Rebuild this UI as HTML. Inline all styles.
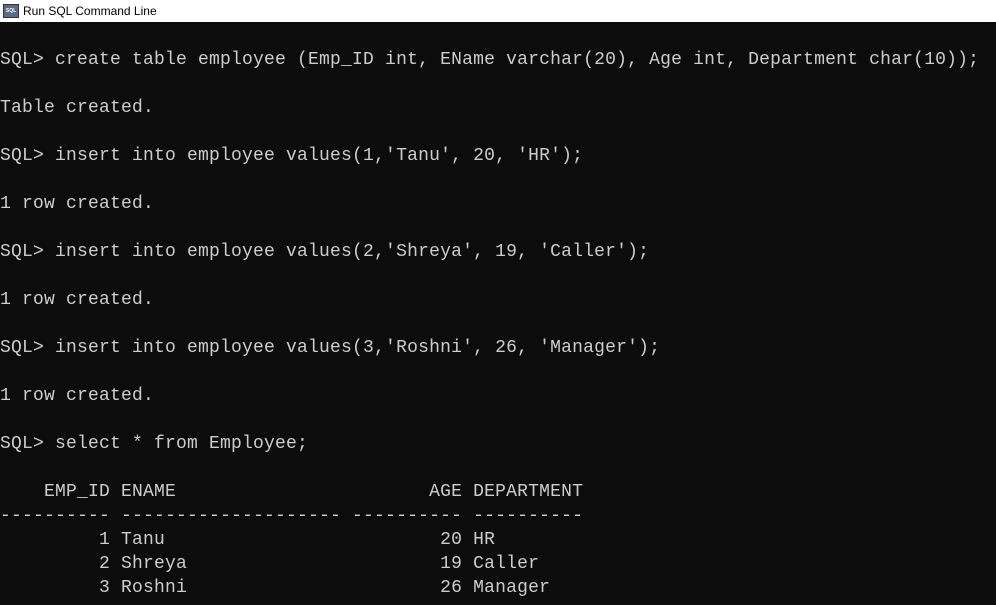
<!DOCTYPE html>
<html><head><meta charset="utf-8"><style>
body{margin:0;width:996px;height:605px;overflow:hidden;background:#0c0c0c}
.tb{height:22px;background:#fff;position:relative;font:12px "Liberation Sans",sans-serif;color:#000}
.tb .ic{position:absolute;left:3px;top:4px;width:14px;height:12px;background:#5a6b8a;border:1px solid #334;font:bold 5px "Liberation Sans",sans-serif;color:#fff;line-height:12px;text-align:center}
.tb span{position:absolute;left:23px;top:4px}
pre{margin:0;padding:26px 0 0 0;color:#cccccc;font:18px/24px "Liberation Mono",monospace;letter-spacing:0.2px;white-space:pre}
</style></head><body>
<div class="tb"><div class="ic">SQL</div><span>Run SQL Command Line</span></div>
<pre>SQL&gt; create table employee (Emp_ID int, EName varchar(20), Age int, Department char(10));

Table created.

SQL&gt; insert into employee values(1,'Tanu', 20, 'HR');

1 row created.

SQL&gt; insert into employee values(2,'Shreya', 19, 'Caller');

1 row created.

SQL&gt; insert into employee values(3,'Roshni', 26, 'Manager');

1 row created.

SQL&gt; select * from Employee;

    EMP_ID ENAME                       AGE DEPARTMENT
---------- -------------------- ---------- ----------
         1 Tanu                         20 HR
         2 Shreya                       19 Caller
         3 Roshni                       26 Manager
</pre>
</body></html>
